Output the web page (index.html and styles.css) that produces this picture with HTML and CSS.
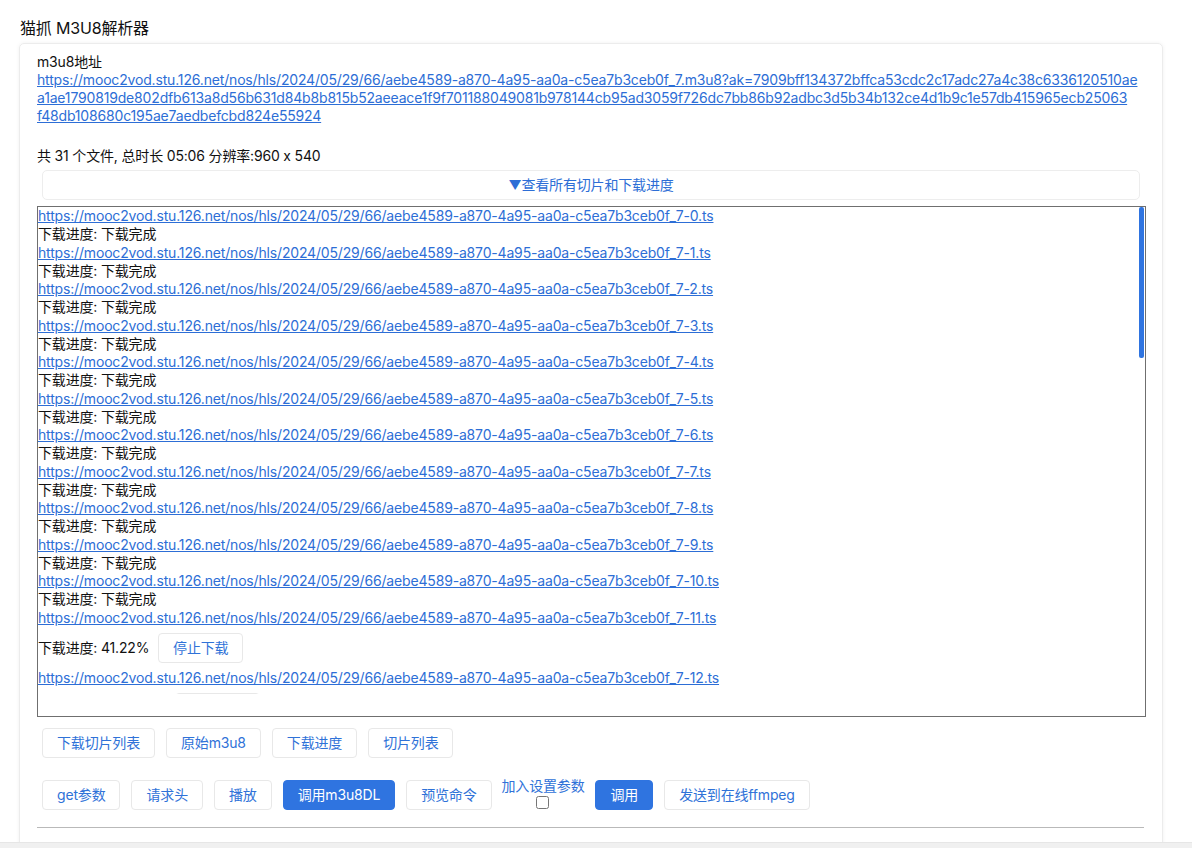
FILE: index.html
```html
<!DOCTYPE html>
<html lang="zh-CN">
<head>
<meta charset="utf-8">
<title>猫抓 M3U8解析器</title>
<link rel="stylesheet" href="styles.css">
</head>
<body>
<div class="page">
  <div class="title">猫抓 M3U8解析器</div>
  <div class="card">
    <div class="label">m3u8地址</div>
    <a class="mainlink" href="#"><span>https://mooc2vod.stu.126.net/nos/hls/2024/05/29/66/aebe4589-a870-4a95-aa0a-c5ea7b3ceb0f_7.m3u8?ak=7909bff134372bffca53cdc2c17adc27a4c38c6336120510ae</span><span>a1ae1790819de802dfb613a8d56b631d84b8b815b52aeeace1f9f701188049081b978144cb95ad3059f726dc7bb86b92adbc3d5b34b132ce4d1b9c1e57db415965ecb25063</span><span>f48db108680c195ae7aedbefcbd824e55924</span></a>
    <div class="info">共 31 个文件, 总时长 05:06 分辨率:960 x 540</div>
    <details open class="details">
      <summary class="summary">查看所有切片和下载进度</summary>
    </details>
    <div class="listbox">
      <div class="list">
        <div class="item"><a href="#">https://mooc2vod.stu.126.net/nos/hls/2024/05/29/66/aebe4589-a870-4a95-aa0a-c5ea7b3ceb0f_7-0.ts</a><div>下载进度: 下载完成</div></div>
        <div class="item"><a href="#">https://mooc2vod.stu.126.net/nos/hls/2024/05/29/66/aebe4589-a870-4a95-aa0a-c5ea7b3ceb0f_7-1.ts</a><div>下载进度: 下载完成</div></div>
        <div class="item"><a href="#">https://mooc2vod.stu.126.net/nos/hls/2024/05/29/66/aebe4589-a870-4a95-aa0a-c5ea7b3ceb0f_7-2.ts</a><div>下载进度: 下载完成</div></div>
        <div class="item"><a href="#">https://mooc2vod.stu.126.net/nos/hls/2024/05/29/66/aebe4589-a870-4a95-aa0a-c5ea7b3ceb0f_7-3.ts</a><div>下载进度: 下载完成</div></div>
        <div class="item"><a href="#">https://mooc2vod.stu.126.net/nos/hls/2024/05/29/66/aebe4589-a870-4a95-aa0a-c5ea7b3ceb0f_7-4.ts</a><div>下载进度: 下载完成</div></div>
        <div class="item"><a href="#">https://mooc2vod.stu.126.net/nos/hls/2024/05/29/66/aebe4589-a870-4a95-aa0a-c5ea7b3ceb0f_7-5.ts</a><div>下载进度: 下载完成</div></div>
        <div class="item"><a href="#">https://mooc2vod.stu.126.net/nos/hls/2024/05/29/66/aebe4589-a870-4a95-aa0a-c5ea7b3ceb0f_7-6.ts</a><div>下载进度: 下载完成</div></div>
        <div class="item"><a href="#">https://mooc2vod.stu.126.net/nos/hls/2024/05/29/66/aebe4589-a870-4a95-aa0a-c5ea7b3ceb0f_7-7.ts</a><div>下载进度: 下载完成</div></div>
        <div class="item"><a href="#">https://mooc2vod.stu.126.net/nos/hls/2024/05/29/66/aebe4589-a870-4a95-aa0a-c5ea7b3ceb0f_7-8.ts</a><div>下载进度: 下载完成</div></div>
        <div class="item"><a href="#">https://mooc2vod.stu.126.net/nos/hls/2024/05/29/66/aebe4589-a870-4a95-aa0a-c5ea7b3ceb0f_7-9.ts</a><div>下载进度: 下载完成</div></div>
        <div class="item"><a href="#">https://mooc2vod.stu.126.net/nos/hls/2024/05/29/66/aebe4589-a870-4a95-aa0a-c5ea7b3ceb0f_7-10.ts</a><div>下载进度: 下载完成</div></div>
        <div class="item"><a href="#">https://mooc2vod.stu.126.net/nos/hls/2024/05/29/66/aebe4589-a870-4a95-aa0a-c5ea7b3ceb0f_7-11.ts</a><div class="prog">下载进度: 41.22%<button class="btn">停止下载</button></div></div>
        <div class="item"><a href="#">https://mooc2vod.stu.126.net/nos/hls/2024/05/29/66/aebe4589-a870-4a95-aa0a-c5ea7b3ceb0f_7-12.ts</a><div class="prog"><span class="stub"></span></div></div>
      </div>
      <div class="thumb"></div>
    </div>
    <div class="row row1">
      <button class="btn">下载切片列表</button>
      <button class="btn">原始m3u8</button>
      <button class="btn">下载进度</button>
      <button class="btn">切片列表</button>
    </div>
    <div class="row row2">
      <button class="btn">get参数</button>
      <button class="btn">请求头</button>
      <button class="btn">播放</button>
      <button class="btn primary">调用m3u8DL</button>
      <button class="btn">预览命令</button>
      <label class="check">加入设置参数<input type="checkbox"></label>
      <button class="btn primary">调用</button>
      <button class="btn">发送到在线ffmpeg</button>
    </div>
    <hr class="rule">
  </div>
</div>
<div class="bottombar"></div>
</body>
</html>
```
FILE: styles.css
```css
html, body {
  margin: 0;
  padding: 0;
  background: #ffffff;
}
body {
  font-family: "Inter", "Noto Sans CJK SC", sans-serif;
  font-size: 14px;
  letter-spacing: -0.17px;
  color: #111;
  overflow: hidden;
}
.page {
  padding: 17px 29px 0 19px;
}
.title {
  font-size: 16px;
  line-height: 22px;
  padding-left: 1px;
  margin-bottom: 4px;
}
.card {
  border: 1px solid #ececec;
  border-radius: 5px;
  box-shadow: 0 0 4px rgba(0, 0, 0, 0.06);
  padding: 9px 16px 20px 17px;
  height: 800px;
}
.label {
  line-height: 18px;
}
a {
  color: #2d6ed6;
  text-decoration: underline;
}
.mainlink {
  display: block;
  line-height: 18px;
}
.mainlink span {
  display: block;
  white-space: nowrap;
}
.info {
  margin-top: 22px;
  line-height: 18px;
}
.details {
  margin: 5px 6px 6px 5px;
  border: 1px solid #ededed;
  border-radius: 5px;
}
.summary {
  list-style: none;
  text-align: center;
  color: #2d6ed6;
  line-height: 28px;
  cursor: pointer;
}
.summary::-webkit-details-marker {
  display: none;
}
.summary::before {
  content: "▼";
  font-size: 13px;
}
.listbox {
  position: relative;
  border: 1px solid #6f6f6f;
  padding-bottom: 22px;
}
.list {
  height: 487px;
  overflow: hidden;
  line-height: 18.25px;
}
.thumb {
  position: absolute;
  top: 0;
  right: 1px;
  width: 5px;
  height: 151px;
  background: #2f74e0;
  border-radius: 2px;
}
.item a {
  display: block;
}
.prog {
  display: flex;
  align-items: center;
  gap: 9px;
  padding: 6px 0;
}
.stub {
  display: block;
  width: 85px;
  height: 30px;
  margin-left: 137px;
  box-sizing: border-box;
  border: 1px solid #e8e8e8;
  border-radius: 4px;
}
.btn {
  font-family: inherit;
  font-size: 14px;
  letter-spacing: -0.17px;
  color: #2f72d8;
  background: #fff;
  border: 1px solid #e8e8e8;
  border-radius: 4px;
  height: 30px;
  padding: 0 14px;
  line-height: 28px;
  cursor: pointer;
  white-space: nowrap;
}
.prog .btn {
  width: 85px;
  padding: 0;
}
.primary {
  background: #2f74e0;
  border-color: #2f74e0;
  color: #fff;
}
.row {
  display: flex;
  align-items: center;
  gap: 11px;
  padding-left: 5px;
}
.row1 {
  margin-top: 11px;
}
.row2 {
  margin-top: 22px;
}
.check {
  display: flex;
  flex-direction: column;
  align-items: center;
  color: #2f72d8;
  line-height: 18px;
  margin-top: -4px;
  margin-left: -1px;
}
.check input {
  margin: 1px 0 0;
  width: 13px;
  height: 13px;
}
.rule {
  border: 0;
  border-top: 1px solid #b9b9b9;
  margin: 17px 0 0;
  width: 1107px;
}
.bottombar {
  position: fixed;
  left: 0;
  right: 0;
  bottom: 0;
  height: 5px;
  background: #f0f0f0;
  border-top: 1px solid #e6e6e6;
}
```
